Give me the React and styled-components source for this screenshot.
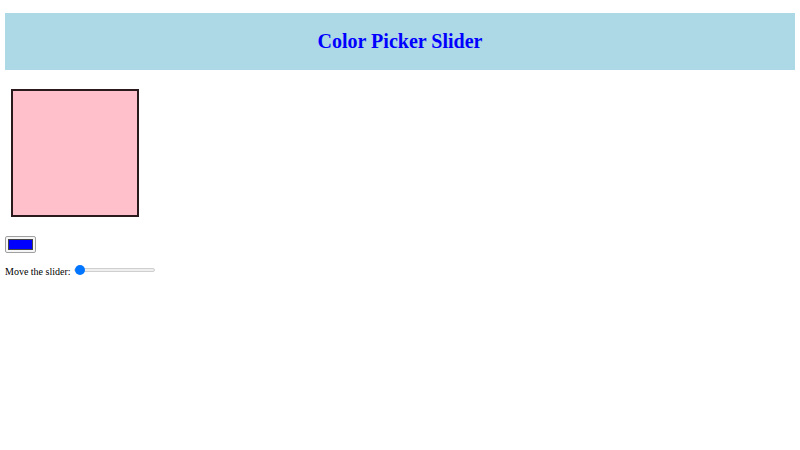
import React, { useState } from "react";
import styled, { createGlobalStyle } from "styled-components";

const GlobalStyle = createGlobalStyle`
  body {
    margin: 5px;
    font-family: "Liberation Serif", "Times New Roman", serif;
    background: #fff;
    color: #000;
  }
`;

const App = () => {
  const [color, setColor] = useState("#0000ff");
  const [value, setValue] = useState(0);

  return (
    <>
      <GlobalStyle />
      <Header>
        <Title>Color Picker Slider</Title>
      </Header>
      <Swatch />
      <ColorInput
        type="color"
        value={color}
        onChange={(e) => setColor(e.target.value)}
      />
      <SliderRow>
        <Label htmlFor="slider">Move the slider:</Label>
        <Range
          id="slider"
          type="range"
          min="0"
          max="100"
          value={value}
          onChange={(e) => setValue(Number(e.target.value))}
        />
      </SliderRow>
    </>
  );
};

export default App;

const Header = styled.header`
  margin-top: 8px;
  height: 57px;
  display: flex;
  align-items: center;
  justify-content: center;
  background-color: lightblue;
`;

const Title = styled.h1`
  margin: 0;
  font-size: 20px;
  font-weight: bold;
  color: blue;
`;

const Swatch = styled.div`
  box-sizing: border-box;
  width: 128px;
  height: 128px;
  margin: 19px 6px 0;
  border: 2px solid #2a1a1e;
  background-color: pink;
`;

const ColorInput = styled.input`
  display: block;
  box-sizing: border-box;
  margin: 19px 0 0;
  width: 31px;
  height: 17px;
  padding: 2px;
  border: 1px solid #a0a0a0;
  border-radius: 2px;
  background: #f6f6f6;
  -webkit-appearance: none;
  appearance: none;
  cursor: pointer;

  &::-webkit-color-swatch-wrapper {
    padding: 0;
  }

  &::-webkit-color-swatch {
    border: 1px solid #444;
    border-radius: 0;
  }
`;

const SliderRow = styled.div`
  display: flex;
  align-items: center;
  margin-top: 10px;
  height: 14px;
`;

const Label = styled.label`
  font-size: 10px;
  margin-right: 3px;
  padding-top: 2px;
`;

const Range = styled.input`
  -webkit-appearance: none;
  appearance: none;
  width: 81px;
  height: 10px;
  margin: 0;
  background: transparent;

  &::-webkit-slider-runnable-track {
    height: 4px;
    border-radius: 3px;
    background: #efefef;
    border: 1px solid #cfcfcf;
  }

  &::-webkit-slider-thumb {
    -webkit-appearance: none;
    width: 10px;
    height: 10px;
    margin-top: -4px;
    border-radius: 50%;
    background: #0075ff;
    border: none;
  }
`;
